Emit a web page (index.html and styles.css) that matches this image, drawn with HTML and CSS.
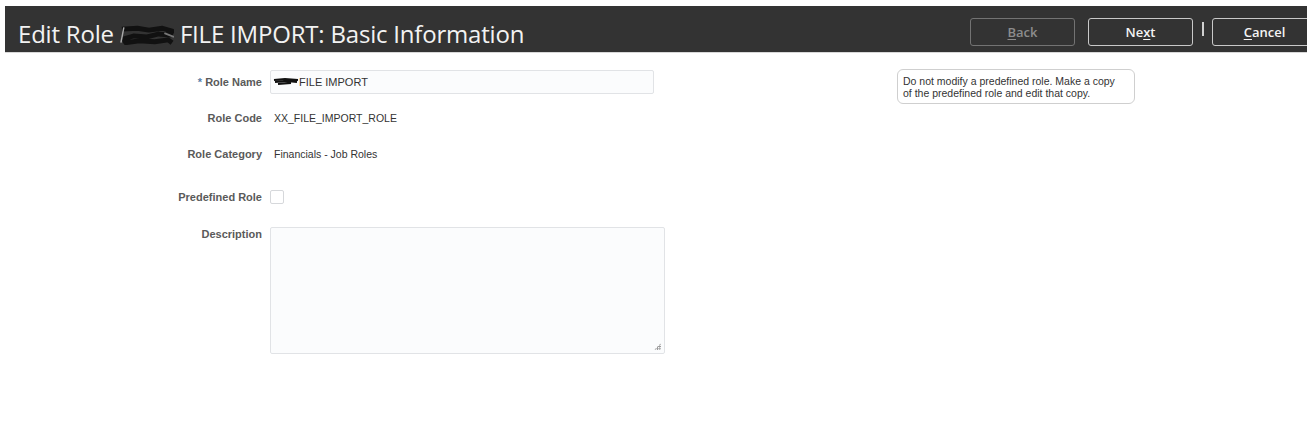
FILE: index.html
```html
<!DOCTYPE html>
<html lang="en">
<head>
<meta charset="utf-8">
<title>Edit Role: Basic Information</title>
<link rel="stylesheet" href="styles.css">
</head>
<body>
<header class="header">
  <h1 class="title">Edit Role <svg class="redact-title" width="54" height="20" viewBox="0 0 56 20"><path d="M2 4 L18 3 L30 5 L44 3 L54 6 L52 10 L40 9 L28 12 L14 11 L4 14 L6 18 L20 16 L36 17 L50 15 L54 18" fill="none" stroke="#111" stroke-width="5" stroke-linejoin="round"/><path d="M4 2 L1 18" stroke="#aaa" stroke-width="1.5"/><path d="M46 8 L56 12" stroke="#777" stroke-width="2"/></svg> FILE IMPORT: Basic Information</h1>
  <div class="actions">
    <button class="btn btn-disabled" type="button"><u>B</u>ack</button>
    <button class="btn" type="button">Ne<u>x</u>t</button>
    <span class="sep"></span>
    <button class="btn" type="button"><u>C</u>ancel</button>
  </div>
</header>
<main class="content">
  <section class="form">
    <div class="row row-name">
      <div class="label"><span class="req">*</span> Role Name</div>
      <div class="field-input"><svg class="redact" width="26" height="8" viewBox="0 0 26 8"><path d="M1 2 L12 1 L25 2 M2 4 L14 3 L24 4 M5 6 L18 5" fill="none" stroke="#111" stroke-width="2"/></svg>FILE IMPORT</div>
    </div>
    <div class="row row-code">
      <div class="label">Role Code</div>
      <div class="value">XX_FILE_IMPORT_ROLE</div>
    </div>
    <div class="row row-cat">
      <div class="label">Role Category</div>
      <div class="value">Financials - Job Roles</div>
    </div>
    <div class="row row-pre">
      <div class="label">Predefined Role</div>
      <div class="checkbox"></div>
    </div>
    <div class="row row-desc">
      <div class="label label-top">Description</div>
      <div class="textarea"><span class="grip"></span></div>
    </div>
  </section>
  <aside class="note">Do not modify a predefined role. Make a copy of the predefined role and edit that copy.</aside>
</main>
</body>
</html>
```
FILE: styles.css
```css
html, body {
  margin: 0;
  padding: 0;
  background: #fff;
  overflow: hidden;
}
body {
  font-family: "Liberation Sans", Arial, sans-serif;
}
.header {
  margin: 6px -10px 0 5px;
  height: 46px;
  background: #333333;
  display: flex;
  align-items: center;
  border-bottom: 1px solid #d8d8d8;
}
.title {
  flex: 1;
  margin: 9px 0 0 13px;
  font-family: "Open Sans", sans-serif;
  font-weight: 400;
  font-size: 24px;
  color: #f2f2f2;
  white-space: nowrap;
  letter-spacing: -0.2px;
}
.redact-title {
  vertical-align: -2px;
}
.actions {
  display: flex;
  align-items: center;
  margin-top: 6px;
}
.btn {
  width: 105px;
  height: 28px;
  margin-left: 13px;
  background: transparent;
  border: 1px solid #c9c9c9;
  border-radius: 3px;
  color: #f4f4f4;
  font-family: "Open Sans", sans-serif;
  font-size: 13px;
  font-weight: 600;
  padding: 0;
}
.btn:first-child {
  margin-left: 0;
}
.btn u {
  text-underline-offset: 2px;
}
.btn-disabled {
  color: #8c8c8c;
  border-color: #737373;
}
.sep {
  width: 2px;
  height: 14px;
  background: #d0d0d0;
  margin: 0 0 6px 9px;
}
.sep + .btn {
  margin-left: 8px;
}
.content {
  display: flex;
  align-items: flex-start;
  padding-top: 16px;
}
.form {
  display: flex;
  flex-direction: column;
}
.row {
  display: flex;
  align-items: center;
}
.label {
  width: 262px;
  text-align: right;
  font-size: 11px;
  font-weight: 700;
  color: #5a5a5a;
  flex-shrink: 0;
}
.req {
  color: #5a7fa8;
}
.value {
  margin-left: 12px;
  font-size: 10.5px;
  color: #333;
}
.field-input {
  margin-left: 8px;
  width: 384px;
  height: 24px;
  box-sizing: border-box;
  border: 1px solid #e1e3e6;
  border-radius: 2px;
  background: #fbfcfd;
  font-size: 11px;
  color: #333;
  display: flex;
  align-items: center;
  padding-left: 2px;
}
.row-name {
  height: 26px;
}
.row-code {
  height: 23px;
  margin-top: 11px;
}
.row-cat {
  height: 23px;
  margin-top: 13px;
}
.row-pre {
  height: 23px;
  margin-top: 20px;
}
.checkbox {
  margin-left: 8px;
  width: 14px;
  height: 14px;
  box-sizing: border-box;
  border: 1px solid #d6d8db;
  border-radius: 2px;
  background: #fff;
}
.row-desc {
  align-items: flex-start;
  margin-top: 19px;
}
.label-top {
  padding-top: 1px;
}
.textarea {
  margin-left: 8px;
  width: 395px;
  height: 127px;
  box-sizing: border-box;
  border: 1px solid #e1e3e6;
  border-radius: 2px;
  background: #fbfcfd;
  position: relative;
}
.grip {
  position: absolute;
  right: 3px;
  bottom: 3px;
  width: 7px;
  height: 7px;
  background: radial-gradient(circle, #9a9a9a 0.8px, transparent 0.9px) 0 0 / 2.33px 2.33px;
  clip-path: polygon(100% 0, 100% 100%, 0 100%);
}
.note {
  margin-left: 232px;
  margin-top: 0;
  width: 238px;
  box-sizing: border-box;
  border: 1px solid #cfcfcf;
  border-radius: 6px;
  padding: 5px 14px 4px 5px;
  font-size: 10.5px;
  line-height: 12px;
  color: #333;
}
```
